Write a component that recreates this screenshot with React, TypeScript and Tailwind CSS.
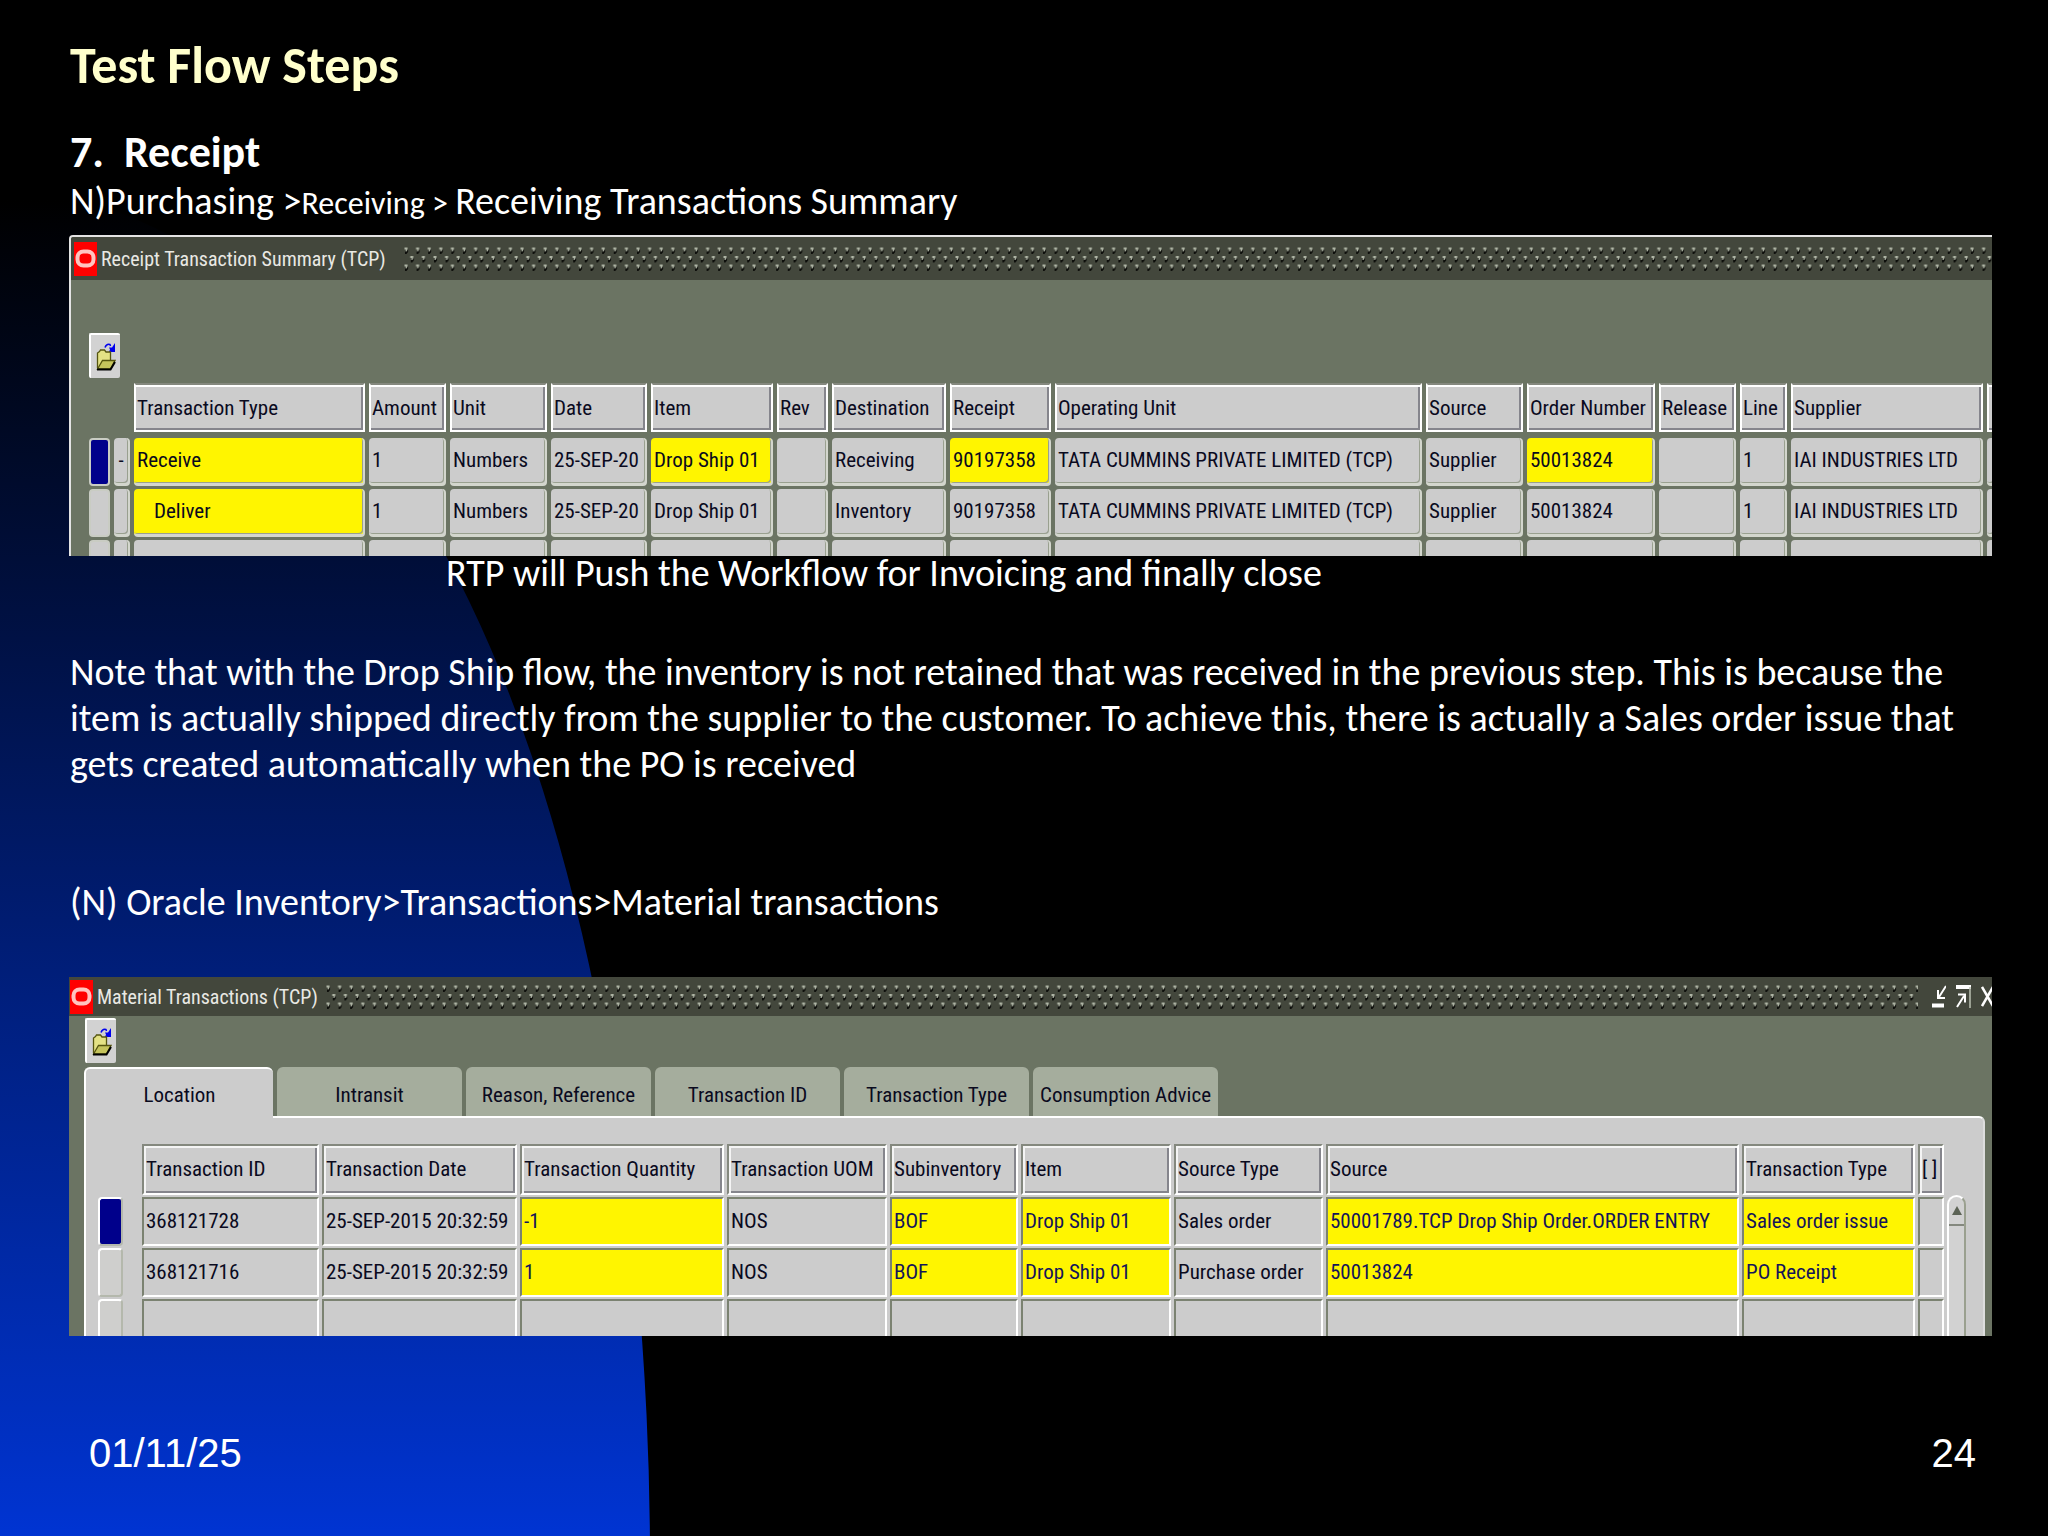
import React, { useState } from 'react';

type Column = { label: string; width: number };
type Cell = { text: string; marked?: boolean; indent?: boolean };

const plain = (text: string): Cell => ({ text });
const marked = (text: string): Cell => ({ text, marked: true });

const RECEIPT_COLUMNS: Column[] = [
  { label: 'Transaction Type', width: 231 },
  { label: 'Amount', width: 77 },
  { label: 'Unit', width: 97 },
  { label: 'Date', width: 96 },
  { label: 'Item', width: 122 },
  { label: 'Rev', width: 51 },
  { label: 'Destination', width: 114 },
  { label: 'Receipt', width: 101 },
  { label: 'Operating Unit', width: 367 },
  { label: 'Source', width: 97 },
  { label: 'Order Number', width: 128 },
  { label: 'Release', width: 77 },
  { label: 'Line', width: 47 },
  { label: 'Supplier', width: 192 },
];

const RECEIPT_ROWS: Cell[][] = [
  [
    marked('Receive'), plain('1'), plain('Numbers'), plain('25-SEP-20'), marked('Drop Ship 01'), plain(''),
    plain('Receiving'), marked('90197358'), plain('TATA CUMMINS PRIVATE LIMITED (TCP)'), plain('Supplier'),
    marked('50013824'), plain(''), plain('1'), plain('IAI INDUSTRIES LTD'),
  ],
  [
    { text: 'Deliver', marked: true, indent: true }, plain('1'), plain('Numbers'), plain('25-SEP-20'),
    plain('Drop Ship 01'), plain(''), plain('Inventory'), plain('90197358'),
    plain('TATA CUMMINS PRIVATE LIMITED (TCP)'), plain('Supplier'), plain('50013824'), plain(''), plain('1'),
    plain('IAI INDUSTRIES LTD'),
  ],
  RECEIPT_COLUMNS.map(() => plain('')),
];

const MATERIAL_COLUMNS: Column[] = [
  { label: 'Transaction ID', width: 177 },
  { label: 'Transaction Date', width: 195 },
  { label: 'Transaction Quantity', width: 204 },
  { label: 'Transaction UOM', width: 160 },
  { label: 'Subinventory', width: 128 },
  { label: 'Item', width: 150 },
  { label: 'Source Type', width: 149 },
  { label: 'Source', width: 413 },
  { label: 'Transaction Type', width: 173 },
  { label: '[ ]', width: 26 },
];

const MATERIAL_ROWS: Cell[][] = [
  [
    plain('368121728'), plain('25-SEP-2015 20:32:59'), marked('-1'), plain('NOS'), marked('BOF'),
    marked('Drop Ship 01'), plain('Sales order'), marked('50001789.TCP Drop Ship Order.ORDER ENTRY'),
    marked('Sales order issue'), plain(''),
  ],
  [
    plain('368121716'), plain('25-SEP-2015 20:32:59'), marked('1'), plain('NOS'), marked('BOF'),
    marked('Drop Ship 01'), plain('Purchase order'), marked('50013824'), marked('PO Receipt'), plain(''),
  ],
  MATERIAL_COLUMNS.map(() => plain('')),
];

const TABS = ['Location', 'Intransit', 'Reason, Reference', 'Transaction ID', 'Transaction Type', 'Consumption Advice'];

const Backdrop: React.FC = () => (
  <svg className="absolute inset-0 w-full h-full" viewBox="0 0 2048 1536" preserveAspectRatio="none" aria-hidden="true">
    <defs>
      <linearGradient id="sweep" gradientUnits="userSpaceOnUse" x1="0" y1="200" x2="0" y2="1536">
        <stop offset="0" stopColor="#000000" />
        <stop offset="1" stopColor="#0034d2" />
      </linearGradient>
    </defs>
    <path d="M0 190 C200 190 370 380 446 556 A503 1250 0 0 1 650 1560 L0 1560 Z" fill="url(#sweep)" />
  </svg>
);

const OracleMark: React.FC = () => (
  <svg className="w-[23px] h-[34px] shrink-0" viewBox="0 0 23 34" aria-hidden="true">
    <rect width="23" height="34" fill="#ff0000" />
    <rect x="3.5" y="9.5" width="16" height="14" rx="6" fill="none" stroke="#ffc4c0" strokeWidth="4" />
  </svg>
);

/* Studded grip that fills the rest of a title bar */
const Grip: React.FC<{ id: string }> = ({ id }) => (
  <svg className="flex-1 h-[24px]" aria-hidden="true">
    <defs>
      <pattern id={id} width="11.6" height="17" patternUnits="userSpaceOnUse">
        <path d="M1 2h3v3l-1.500 2h-1.500z M6.800 10.500h3v3l-1.500 2h-1.500z" fill="#0c0d0a" />
        <path d="M0.500 0.500h3v2l-1 2h-1v-2h-1z M6.300 9h3v2l-1 2h-1v-2h-1z" fill="#b0b6a6" />
      </pattern>
    </defs>
    <rect width="100%" height="24" fill={`url(#${id})`} />
  </svg>
);

const FolderButton: React.FC = () => (
  <button
    type="button"
    aria-label="Open folder"
    className="flex items-center justify-center w-[31px] h-[45px] bg-[#d2d2d2] border-t-2 border-l-2 border-white rounded-[2px]"
  >
    <svg className="w-5 h-[29px]" viewBox="0 0 20 29" aria-hidden="true">
      <path d="M9 5.500 Q10.500 1.500 14 2.500 L14.500 4" fill="none" stroke="#0000ee" strokeWidth="1.500" />
      <path d="M19 1v9h-6l1-2.500-1-2h3z" fill="#0000ee" />
      <path d="M1.500 26V11l2-1.500 1-1.500h4l1.500 2h4.500V19" fill="#e4e285" stroke="#55550f" strokeWidth="1.300" />
      <path d="M1.500 27L6.500 18.500H19L14.500 27z" fill="#c5c45c" stroke="#55550f" strokeWidth="1.300" />
      <path d="M1 27.500h13.500L19 20" fill="none" stroke="#000" strokeWidth="2" />
    </svg>
  </button>
);

const WindowControls: React.FC = () => (
  <div className="flex items-center gap-2.5 pl-3.5 -mr-0.5">
    <button type="button" aria-label="Minimize">
      <svg className="w-[14px] h-[23px]" viewBox="0 0 14 23" fill="none" stroke="#fff" strokeWidth="2" aria-hidden="true">
        <path d="M14 1L7 12M6 5v8h7" />
        <path d="M0 20.500h12" strokeWidth="4" />
      </svg>
    </button>
    <button type="button" aria-label="Maximize">
      <svg className="w-[15px] h-[23px]" viewBox="0 0 15 23" fill="none" stroke="#fff" strokeWidth="2" aria-hidden="true">
        <path d="M0 2h15" strokeWidth="4" />
        <path d="M14 2v21" strokeWidth="1.500" stroke="#b9bfb0" />
        <path d="M1 22L8 11M2 9.500h7v8" />
      </svg>
    </button>
    <button type="button" aria-label="Close">
      <svg className="w-[13px] h-[23px]" viewBox="0 0 13 23" fill="none" stroke="#fff" strokeWidth="2.500" aria-hidden="true">
        <path d="M1 2L12 21M12 2L1 21" />
      </svg>
    </button>
  </div>
);

const ReceiptWindow: React.FC = () => (
  <section className="h-[321px] overflow-hidden bg-[#6b7463] border-t-2 border-l-2 border-[#e4e4e4] rounded-tl-[4px] font-['Roboto_Condensed','Liberation_Sans',sans-serif] text-[21px] text-[#0a0a1e]">
    <div className="flex items-center h-[43px] pl-[3px] bg-[#43473c]">
      <OracleMark />
      <h3 className="w-[307px] pl-1 text-[20px] text-[#e9e9e4] whitespace-nowrap">Receipt Transaction Summary (TCP)</h3>
      <Grip id="grip-receipt" />
    </div>
    <div className="pt-[53px] pl-[18px]">
      <FolderButton />
    </div>
    <div className="mt-[2px] pl-[14px] -mr-2">
      <table className="w-full table-fixed border-separate border-spacing-x-1 border-spacing-y-[3px]">
        <colgroup>
          <col className="w-[21px]" />
          <col className="w-[16px]" />
          {RECEIPT_COLUMNS.map((col) => (
            <col key={col.label} style={{ width: col.width }} />
          ))}
          <col />
        </colgroup>
        <thead>
          <tr>
            <td colSpan={2} />
            {[...RECEIPT_COLUMNS, { label: '', width: 0 }].map((col) => (
              <th key={col.label} className="p-0 pb-[3px] text-left font-normal">
                <div className="flex items-center h-[49px] pt-[3px] pl-px bg-[#cccccc] border-2 border-white border-t-[#84887e] shadow-[inset_0_2px_#fff,inset_-2px_-2px_#85858c] whitespace-nowrap">
                  {col.label}
                </div>
              </th>
            ))}
          </tr>
        </thead>
        <tbody>
          {RECEIPT_ROWS.map((row, idx) => (
            <tr key={idx} className="h-12">
              <td
                className={`p-0 border-2 border-[#c9ccc3] rounded-[4px] ${idx === 0 ? 'bg-[#00008b]' : 'bg-[#cccccc]'}`}
              />
              <td className="p-0 text-center bg-[#cccccc] border-r-2 border-b-[3px] border-[#d3d6cd] rounded-[4px] shadow-[inset_-1px_-1px_#99a08f]">
                {idx === 0 ? '-' : ''}
              </td>
              {[...row, plain('')].map((cell, i) => (
                <td
                  key={i}
                  className={`p-0 overflow-hidden whitespace-nowrap border-r-2 border-b-[3px] border-[#d3d6cd] rounded-[4px] shadow-[inset_-1px_-1px_#99a08f] ${
                    cell.marked ? 'bg-[#fff500]' : 'bg-[#cccccc]'
                  } ${cell.indent ? 'pl-5' : 'pl-[3px]'}`}
                >
                  {cell.text}
                </td>
              ))}
            </tr>
          ))}
        </tbody>
      </table>
    </div>
  </section>
);

const MaterialWindow: React.FC = () => {
  const [activeTab, setActiveTab] = useState(0);

  return (
    <section className="flex flex-col h-[359px] overflow-hidden bg-[#6b7463] font-['Roboto_Condensed','Liberation_Sans',sans-serif] text-[21px] text-[#0a0a1e]">
      <div className="flex items-center shrink-0 h-[39px] pl-px bg-[#43473c]">
        <OracleMark />
        <h3 className="w-[233px] pl-1 text-[20px] text-[#e9e9e4] whitespace-nowrap">Material Transactions (TCP)</h3>
        <Grip id="grip-material" />
        <WindowControls />
      </div>
      <div className="pt-[2px] pl-4">
        <FolderButton />
      </div>

      {/* Tabs */}
      <div role="tablist" className="flex gap-1 pt-1 pl-[15px]">
        {TABS.map((tab, idx) => (
          <button
            key={tab}
            type="button"
            role="tab"
            aria-selected={idx === activeTab}
            onClick={() => setActiveTab(idx)}
            className={`shrink-0 whitespace-nowrap cursor-pointer ${
              idx === activeTab
                ? 'relative w-[189px] h-[51px] -mb-[2px] pt-1 bg-[#cccccc] border-t-2 border-l-2 border-white rounded-t-[6px]'
                : 'w-[185px] h-[49px] pt-2 bg-[#a5ad9d] rounded-t-[6px]'
            }`}
          >
            {tab}
          </button>
        ))}
      </div>

      <div className="flex flex-1 ml-[15px] mr-[7px] pt-[24px] pl-[9px] pr-[17px] bg-[#cccccc] border-2 border-b-0 border-white border-r-[#dddddd] rounded-tr-[6px]">
        <table className="flex-1 self-start table-fixed w-full border-separate border-spacing-x-[3px] border-spacing-y-[2px]">
          <colgroup>
            <col className="w-[41px]" />
            {MATERIAL_COLUMNS.map((col) => (
              <col key={col.label} style={{ width: col.width }} />
            ))}
          </colgroup>
          <thead>
            <tr className="h-[51px]">
              <td />
              {MATERIAL_COLUMNS.map((col) => (
                <th
                  key={col.label}
                  className="p-0 pl-[2px] text-left font-normal whitespace-nowrap border-2 border-white border-t-[#84887e] border-l-[#84887e] shadow-[inset_2px_2px_#f4f4f4,inset_-2px_-2px_#85858c]"
                >
                  {col.label}
                </th>
              ))}
            </tr>
          </thead>
          <tbody>
            {MATERIAL_ROWS.map((row, idx) => (
              <tr key={idx} className="h-[49px]">
                <td className="p-0">
                  <div
                    className={`w-[25px] h-[49px] border-2 border-white border-r-[#b4b8ac] border-b-[#b4b8ac] rounded-[4px] ${
                      idx === 0 ? 'bg-[#00008b]' : 'bg-[#cfcfcd]'
                    }`}
                  />
                </td>
                {row.map((cell, i) => (
                  <td
                    key={i}
                    className={`p-0 pl-[2px] whitespace-nowrap border-2 border-white border-t-[#7b8271] border-l-[#7b8271] ${
                      cell.marked ? 'bg-[#fff500] text-[#14145a]' : ''
                    }`}
                  >
                    {cell.text}
                  </td>
                ))}
              </tr>
            ))}
          </tbody>
        </table>

        {/* Scrollbar */}
        <div className="w-[19px] mt-[53px] shrink-0 border-2 border-b-0 border-white border-r-[#9aa08f] rounded-t-[10px] bg-[#d2d2d2]">
          <button
            type="button"
            aria-label="Scroll up"
            className="flex items-center justify-center w-full h-[29px] border-b-2 border-[#84887e]"
          >
            <svg className="w-[10px] h-[9px]" viewBox="0 0 10 9" aria-hidden="true">
              <path d="M5 0l5 9H0z" fill="#5c6355" />
            </svg>
          </button>
        </div>
      </div>
    </section>
  );
};

export default function App() {
  return (
    <main className="relative min-h-screen bg-black text-white font-['Carlito','Lato',sans-serif]">
      <Backdrop />
      <div className="relative flex flex-col min-h-screen pt-[33px] pl-[69px] pr-14">
        <h1 className="pl-px text-[52px] leading-[64px] font-bold text-[#ffffcc]">Test Flow Steps</h1>
        <h2 className="mt-[29px] pl-px text-[44px] leading-[52px] font-bold whitespace-pre">7.  Receipt</h2>
        <p className="pl-px text-[38px] leading-[46px]">
          N)Purchasing &gt;<span className="text-[32px]">Receiving &gt; </span>Receiving Transactions Summary
        </p>
        <div className="mt-[8px]">
          <ReceiptWindow />
        </div>
        <p className="pl-[377px] -mt-[6px] text-[38px] leading-[46px]">
          RTP will Push the Workflow for Invoicing and finally close
        </p>
        <p className="mt-[53px] pl-px -mr-2 text-[38px] leading-[46px]">
          Note that with the Drop Ship flow, the inventory is not retained that was received in the previous step. This is
          because the item is actually shipped directly from the supplier to the customer. To achieve this, there is
          actually a Sales order issue that gets created automatically when the PO is received
        </p>
        <p className="mt-[92px] pl-px text-[38px] leading-[46px]">
          (N) Oracle Inventory&gt;Transactions&gt;Material transactions
        </p>
        <div className="mt-[52px]">
          <MaterialWindow />
        </div>
        <footer className="flex justify-between mt-auto pb-[58px] pl-5 pr-4 font-['Liberation_Sans',sans-serif] text-[40px] leading-[50px]">
          <span>01/11/25</span>
          <span>24</span>
        </footer>
      </div>
    </main>
  );
}
